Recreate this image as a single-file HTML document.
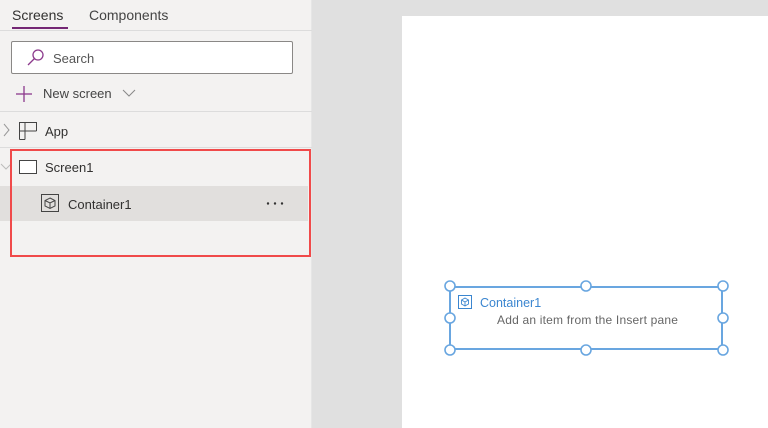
<!DOCTYPE html>
<html><head><style>
*{margin:0;padding:0;box-sizing:border-box}
body{width:768px;height:428px;overflow:hidden;background:#e0e0e0;font-family:"Liberation Sans",sans-serif;position:relative;color:#323130}
.abs{position:absolute}
#panel{left:0;top:0;width:312px;height:428px;background:#f3f2f1;border-right:1px solid #e6e6e6}
</style></head><body>
<div id="panel" class="abs">
  <div class="abs" style="left:12px;top:7px;font-size:14px;color:#323130">Screens</div>
  <div class="abs" style="left:12px;top:27px;width:56px;height:2px;background:#742774"></div>
  <div class="abs" style="left:89px;top:7px;font-size:14px;color:#444">Components</div>
  <div class="abs" style="left:0;top:30px;width:312px;height:1px;background:#dcdcdc"></div>
  <div class="abs" style="left:11px;top:41px;width:282px;height:33px;background:#fff;border:1px solid #8a8886;border-radius:2px"></div>
  <svg class="abs" style="left:26px;top:48px" width="20" height="18"><circle cx="12" cy="7" r="5" fill="none" stroke="#8c3a8c" stroke-width="1.3"/><line x1="8.5" y1="10.5" x2="2" y2="17" stroke="#8c3a8c" stroke-width="1.3"/></svg>
  <div class="abs" style="left:53px;top:51px;font-size:13px;color:#555">Search</div>
  <svg class="abs" style="left:15px;top:85px" width="18" height="18"><line x1="9" y1="1" x2="9" y2="17" stroke="#8c3a8c" stroke-width="1.3"/><line x1="1" y1="9" x2="17" y2="9" stroke="#8c3a8c" stroke-width="1.3"/></svg>
  <div class="abs" style="left:43px;top:86px;font-size:13px;color:#444">New screen</div>
  <svg class="abs" style="left:122px;top:88px" width="14" height="10"><polyline points="1,2 7,8 13,2" fill="none" stroke="#888" stroke-width="1"/></svg>
  <div class="abs" style="left:0;top:111px;width:312px;height:1px;background:#dcdcdc"></div>
  <svg class="abs" style="left:2px;top:123px" width="8" height="14"><polyline points="2,1 7,7 2,13" fill="none" stroke="#999" stroke-width="1"/></svg>
  <svg class="abs" style="left:19px;top:122px" width="18" height="18"><path d="M0.5 17.5 V0.5 H17.5 V9 M6 0.5 V17.5 M0.5 9 H17.5 M0.5 17.5 H6" fill="none" stroke="#444"/></svg>
  <div class="abs" style="left:45px;top:124px;font-size:13px">App</div>
  <div class="abs" style="left:0;top:147px;width:312px;height:1px;background:#dcdcdc"></div>
  <div class="abs" style="left:0;top:186px;width:308px;height:35px;background:#e1dfdd"></div>
  <svg class="abs" style="left:0px;top:163px" width="12" height="8"><polyline points="1,1 6,6 11,1" fill="none" stroke="#bbb" stroke-width="1"/></svg>
  <div class="abs" style="left:19px;top:160px;width:18px;height:14px;border:1px solid #444;background:#fff"></div>
  <div class="abs" style="left:45px;top:160px;font-size:13px">Screen1</div>
  <svg class="abs" style="left:41px;top:194px" width="18" height="18"><rect x="0.5" y="0.5" width="17" height="17" fill="none" stroke="#444"/><path d="M9 4 L14 6.5 L14 12 L9 14.5 L4 12 L4 6.5 Z M4 6.5 L9 9 L14 6.5 M9 9 L9 14.5" fill="none" stroke="#444"/></svg>
  <div class="abs" style="left:68px;top:197px;font-size:13px">Container1</div>
  <svg class="abs" style="left:265px;top:201px" width="20" height="5"><circle cx="3" cy="2.5" r="1.2" fill="#333"/><circle cx="10" cy="2.5" r="1.2" fill="#333"/><circle cx="17" cy="2.5" r="1.2" fill="#333"/></svg>
  <div class="abs" style="left:10px;top:149px;width:301px;height:108px;border:2px solid #f04a4a"></div>
</div>
<div class="abs" style="left:402px;top:16px;width:366px;height:412px;background:#fff"></div>
<div class="abs" style="left:449px;top:286px;width:274px;height:64px;border:2px solid #69a6e0"></div>
<svg class="abs" style="left:440px;top:277px" width="292" height="82">
 <g fill="#fff" stroke="#69a6e0" stroke-width="1.6">
  <circle cx="10" cy="9" r="5"/><circle cx="146" cy="9" r="5"/><circle cx="283" cy="9" r="5"/>
  <circle cx="10" cy="41" r="5"/><circle cx="283" cy="41" r="5"/>
  <circle cx="10" cy="73" r="5"/><circle cx="146" cy="73" r="5"/><circle cx="283" cy="73" r="5"/>
 </g>
</svg>
<svg class="abs" style="left:458px;top:295px" width="14" height="14"><rect x="0.5" y="0.5" width="13" height="13" fill="none" stroke="#3b86d0"/><path d="M7 3 L10.5 5 L10.5 9 L7 11 L3.5 9 L3.5 5 Z M3.5 5 L7 7 L10.5 5 M7 7 L7 11" fill="none" stroke="#3b86d0" stroke-width="0.9"/></svg>
<div class="abs" style="left:480px;top:296px;font-size:12.5px;color:#3b86d0">Container1</div>
<div class="abs" style="left:497px;top:313px;font-size:12px;color:#666;letter-spacing:0.2px">Add an item from the Insert pane</div>
</body></html>
